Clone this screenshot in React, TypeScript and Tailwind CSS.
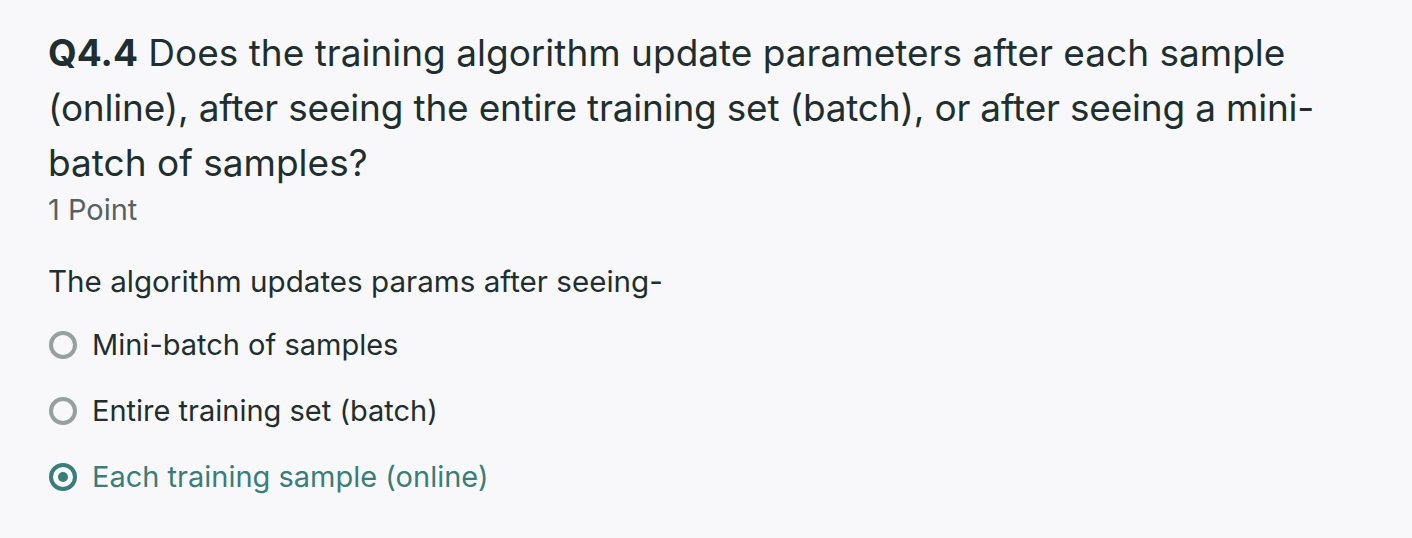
type Option = {
  label: string;
  selected?: boolean;
};

const options: Option[] = [
  { label: "Mini-batch of samples" },
  { label: "Entire training set (batch)" },
  { label: "Each training sample (online)", selected: true },
];

function Radio({ selected }: { selected?: boolean }) {
  return (
    <span
      className={
        selected
          ? "flex h-[28px] w-[28px] shrink-0 items-center justify-center rounded-full border-[4px] border-[#3a7d79]"
          : "flex h-[28px] w-[28px] shrink-0 items-center justify-center rounded-full border-[4px] border-[#999f9f]"
      }
    >
      {selected && <span className="h-[10px] w-[10px] rounded-full bg-[#3a7d79]" />}
    </span>
  );
}

export default function App() {
  return (
    <div className="min-h-screen bg-[#f8f8fa] pl-[48px] pt-[25px] font-['Inter',sans-serif] text-[#1f2e2e]">
      {/* ---------- QUESTION ---------- */}
      <h2 className="text-[37px] leading-[55px] font-normal">
        <span className="font-bold">Q4.4</span> Does the training algorithm update parameters after each sample
        <br />
        <span className="tracking-[-0.2px]">
          (online), after seeing the entire training set (batch), or after seeing a mini-
        </span>
        <br />
        batch of samples?
      </h2>
      <div className="mt-[3px] text-[29px] leading-[34px] text-[#566262]">1 Point</div>

      {/* ---------- ANSWER ---------- */}
      <p className="mt-[36px] text-[29.6px] leading-[36px]">The algorithm updates params after seeing-</p>

      <ul className="mt-[28px] flex flex-col gap-[30px]">
        {options.map((o) => (
          <li key={o.label} className="flex items-center gap-[15px] pl-[1px]">
            <Radio selected={o.selected} />
            <span
              className={
                o.selected ? "text-[29px] leading-[36px] text-[#3a7d79]" : "text-[29px] leading-[36px]"
              }
            >
              {o.label}
            </span>
          </li>
        ))}
      </ul>
    </div>
  );
}
